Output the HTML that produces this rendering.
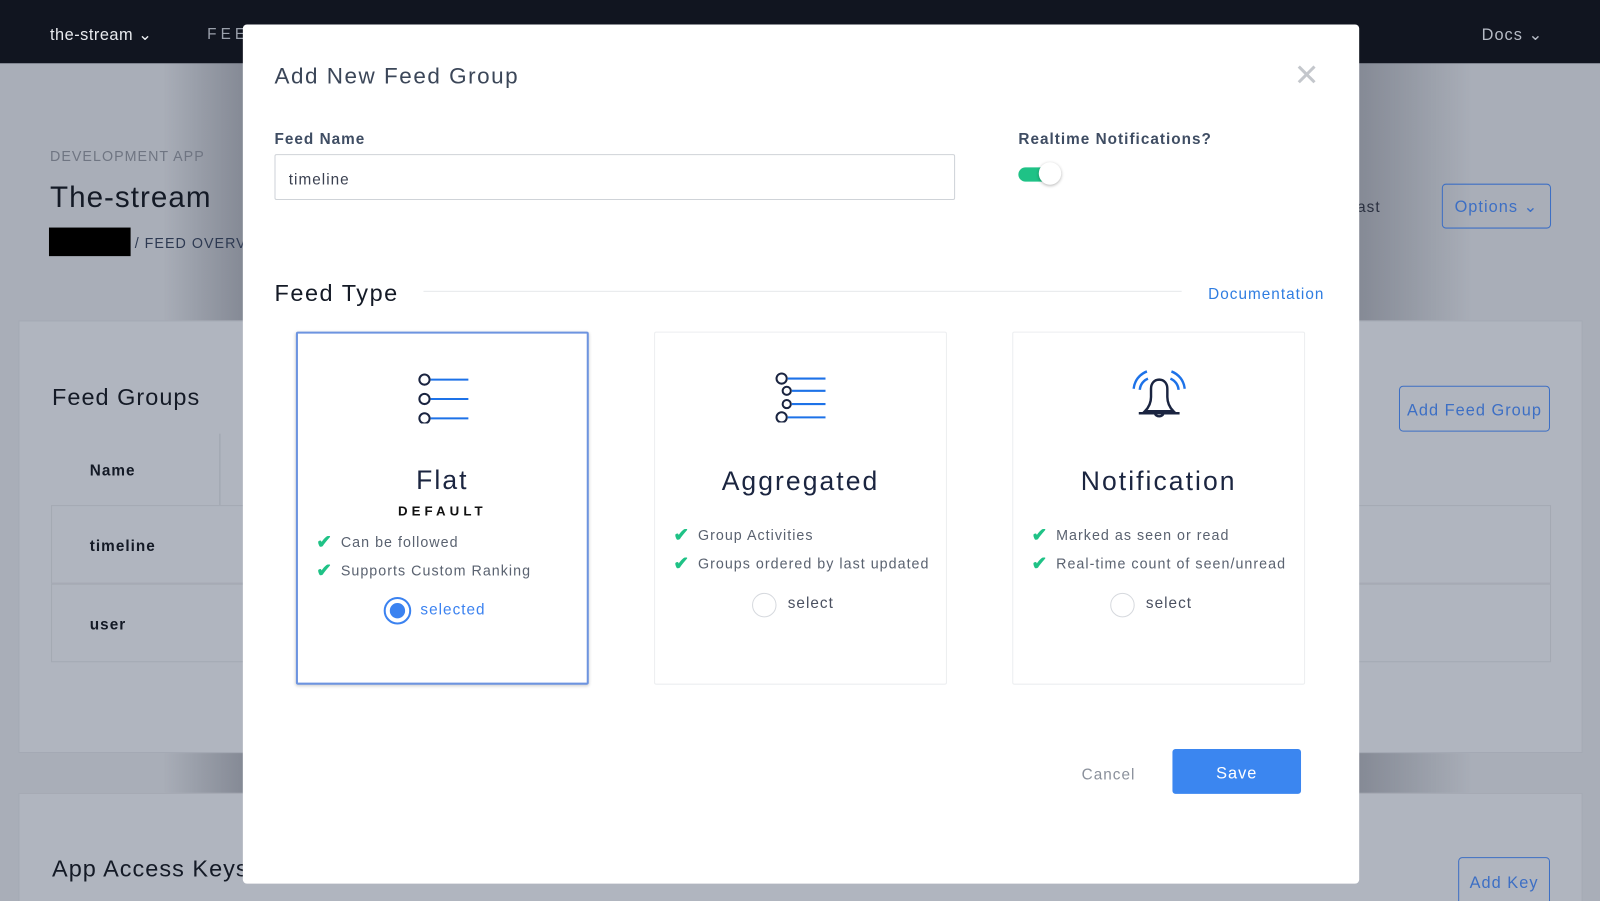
<!DOCTYPE html>
<html><head><meta charset="utf-8"><style>
*{margin:0;padding:0;box-sizing:border-box}
html,body{width:1600px;height:901px;overflow:hidden}
body{position:relative;font-family:"Liberation Sans",sans-serif;background:#a9aeb8;letter-spacing:1px}
#root{position:absolute;left:0;top:0;width:1568px;height:883px;transform:scale(1.020408);transform-origin:0 0}
.a{position:absolute;white-space:nowrap}
.nav{position:absolute;left:0;top:0;width:1568px;height:62px;background:#111520}
.panel{position:absolute;background:#b0b5bf;border:1px solid #a4a9b3}
.btn{position:absolute;border:1.5px solid #3d6fc4;border-radius:4px;color:#3d6fc4;font-size:16px;text-align:center}
.shade{position:absolute;top:62px;height:839px}
.modal{position:absolute;left:238px;top:24px;width:1094px;height:842px;background:#fff;border-radius:4px}
.card{position:absolute;top:301px;width:287px;height:346px;border:1px solid #eceef0;border-radius:2px;background:#fff}
.card h3{position:absolute;top:130px;width:100%;text-align:center;font-weight:normal;font-size:26px;color:#1b2540;letter-spacing:2px}
.li{position:absolute;font-size:14px;color:#5a6270;left:42px}
.ck{position:absolute;left:-24px;top:-2px;color:#1fc286;font-size:18px;font-weight:bold}
.rad{position:absolute;width:24px;height:24px;border-radius:50%;border:1.5px solid #d6d9de}
</style></head><body><div id="root">
<div class="nav"></div>
<div class="a" style="left:49px;top:24px;color:#e8eaee;font-size:16px;letter-spacing:0.5px">the-stream ⌄</div>
<div class="a" style="left:203px;top:25px;color:#9aa0ab;font-size:15px;letter-spacing:4px">FEE</div>
<div class="a" style="left:1452px;top:24px;color:#b6bbc5;font-size:16px">Docs ⌄</div>
<div class="shade" style="left:160px;width:78px;background:linear-gradient(90deg,rgba(0,0,0,0),rgba(40,45,60,.28))"></div>
<div class="shade" style="left:1332px;width:110px;background:linear-gradient(90deg,rgba(40,45,60,.28),rgba(0,0,0,0))"></div>
<div class="a" style="left:49px;top:145px;color:#6f7582;font-size:14px">DEVELOPMENT APP</div>
<div class="a" style="left:49px;top:178px;color:#141a26;font-size:29px">The-stream</div>
<div class="a" style="left:48px;top:223px;width:80px;height:28px;background:#000"></div>
<div class="a" style="left:132px;top:230px;color:#2e3a52;font-size:14px">/ FEED OVERVI</div>
<div class="a" style="left:1330px;top:195px;color:#2a3040;font-size:15px">ast</div>
<div class="btn" style="left:1413px;top:180px;width:107px;height:44px;line-height:46px">Options ⌄</div>
<div class="panel" style="left:18px;top:314px;width:1533px;height:424px"></div>
<div class="a" style="left:51px;top:376px;color:#141a26;font-size:23px">Feed Groups</div>
<div class="a" style="left:88px;top:453px;color:#141a26;font-size:15px;font-weight:bold">Name</div>
<div class="a" style="left:215px;top:425px;width:1px;height:70px;background:#9ea3ad"></div>
<div class="panel" style="left:50px;top:495px;width:1470px;height:77px"></div>
<div class="panel" style="left:50px;top:572px;width:1470px;height:77px"></div>
<div class="a" style="left:88px;top:527px;color:#141a26;font-size:15px;font-weight:bold">timeline</div>
<div class="a" style="left:88px;top:604px;color:#141a26;font-size:15px;font-weight:bold">user</div>
<div class="btn" style="left:1371px;top:378px;width:148px;height:45px;line-height:48px">Add Feed Group</div>
<div class="panel" style="left:18px;top:777px;width:1533px;height:140px"></div>
<div class="a" style="left:51px;top:838px;color:#141a26;font-size:23px">App Access Keys</div>
<div class="btn" style="left:1429px;top:840px;width:90px;height:50px;line-height:50px">Add Key</div>

<div class="modal">
<div class="a" style="left:31px;top:38px;font-size:22px;color:#3b4658;letter-spacing:1.5px">Add New Feed Group</div>
<div class="a" style="left:1030px;top:38px;font-size:30px;color:#c4c7cc;font-weight:200;line-height:26px">✕</div>
<div class="a" style="left:31px;top:104px;font-size:15px;font-weight:bold;color:#3f4d63">Feed Name</div>
<div class="a" style="left:31px;top:127px;width:667px;height:45px;border:1px solid #cfd3d8;border-radius:2px;padding:16px 13px;font-size:15px;color:#3a4050">timeline</div>
<div class="a" style="left:760px;top:104px;font-size:15px;font-weight:bold;color:#3f4d63">Realtime Notifications?</div>
<div class="a" style="left:760px;top:140px;width:36px;height:14px;border-radius:7px;background:#1fc286"></div>
<div class="a" style="left:780px;top:135px;width:22px;height:22px;border-radius:50%;background:#fff;box-shadow:0 1px 3px rgba(0,0,0,.3)"></div>
<div class="a" style="left:31px;top:250px;font-size:23px;color:#141a26;letter-spacing:1.5px">Feed Type</div>
<div class="a" style="left:177px;top:261px;width:743px;height:1px;background:#e6e8eb"></div>
<div class="a" style="left:946px;top:256px;font-size:15px;color:#2f7de1">Documentation</div>

<div class="card" style="left:52px;border:2px solid #6d94e0;box-shadow:0 1px 3px rgba(0,0,0,.2)">
<svg class="a" style="left:116px;top:36px" width="54" height="52" viewBox="0 0 54 52"><g fill="none" stroke-width="2"><g stroke="#1a2440"><circle cx="8" cy="9" r="5"/><circle cx="8" cy="28" r="5"/><circle cx="8" cy="47" r="5"/></g><g stroke="#1d72e8"><path d="M14 9h37M14 28h37M14 47h37"/></g></g></svg>
<h3 style="top:128px">Flat</h3>
<div class="a" style="top:166px;width:100%;text-align:center;font-size:13px;font-weight:bold;letter-spacing:4px;color:#111">DEFAULT</div>
<div class="li" style="top:196px">Can be followed<span class="ck">✔</span></div>
<div class="li" style="top:224px">Supports Custom Ranking<span class="ck">✔</span></div>
<div class="rad" style="left:84px;top:258px;border:2px solid #3b82f0;width:27px;height:27px"><div style="margin:4px;width:15px;height:15px;border-radius:50%;background:#3b82f0"></div></div>
<div class="a" style="left:120px;top:262px;font-size:15px;color:#3b82f0">selected</div>
</div>

<div class="card" style="left:403px">
<svg class="a" style="left:116px;top:36px" width="54" height="52" viewBox="0 0 54 52"><g fill="none" stroke-width="2"><g stroke="#1a2440"><circle cx="8" cy="9" r="5"/><circle cx="13" cy="21" r="4"/><circle cx="13" cy="34" r="4"/><circle cx="8" cy="47" r="5"/></g><g stroke="#1d72e8"><path d="M14 9h37M18 21h33M18 34h33M14 47h37"/></g></g></svg>
<h3>Aggregated</h3>
<div class="li" style="top:190px">Group Activities<span class="ck">✔</span></div>
<div class="li" style="top:218px">Groups ordered by last updated<span class="ck">✔</span></div>
<div class="rad" style="left:95px;top:255px"></div>
<div class="a" style="left:130px;top:257px;font-size:15px;color:#4a5060">select</div>
</div>

<div class="card" style="left:754px">
<svg class="a" style="left:114px;top:34px" width="58" height="56" viewBox="0 0 58 56"><g fill="none" stroke-width="2.4"><path stroke="#1d72e8" d="M4 21a20 20 0 0 1 13-17M10 22a13 13 0 0 1 8-11M54 21a20 20 0 0 0-13-17M48 22a13 13 0 0 0-8-11"/><path stroke="#1a2440" d="M29 12c-5 0-8 4-8 9v8c0 6-3 11-6 14h28c-3-3-6-8-6-14v-8c0-5-3-9-8-9zM9 45h40M25 45a4 3 0 0 0 8 0"/></g></svg>
<h3>Notification</h3>
<div class="li" style="top:190px">Marked as seen or read<span class="ck">✔</span></div>
<div class="li" style="top:218px">Real-time count of seen/unread<span class="ck">✔</span></div>
<div class="rad" style="left:95px;top:255px"></div>
<div class="a" style="left:130px;top:257px;font-size:15px;color:#4a5060">select</div>
</div>

<div class="a" style="left:822px;top:727px;font-size:15px;color:#8a909b">Cancel</div>
<div class="a" style="left:911px;top:710px;width:126px;height:44px;border-radius:3px;background:#3b86f0;color:#fff;font-size:16px;text-align:center;line-height:50px">Save</div>
</div>
</div></body></html>
